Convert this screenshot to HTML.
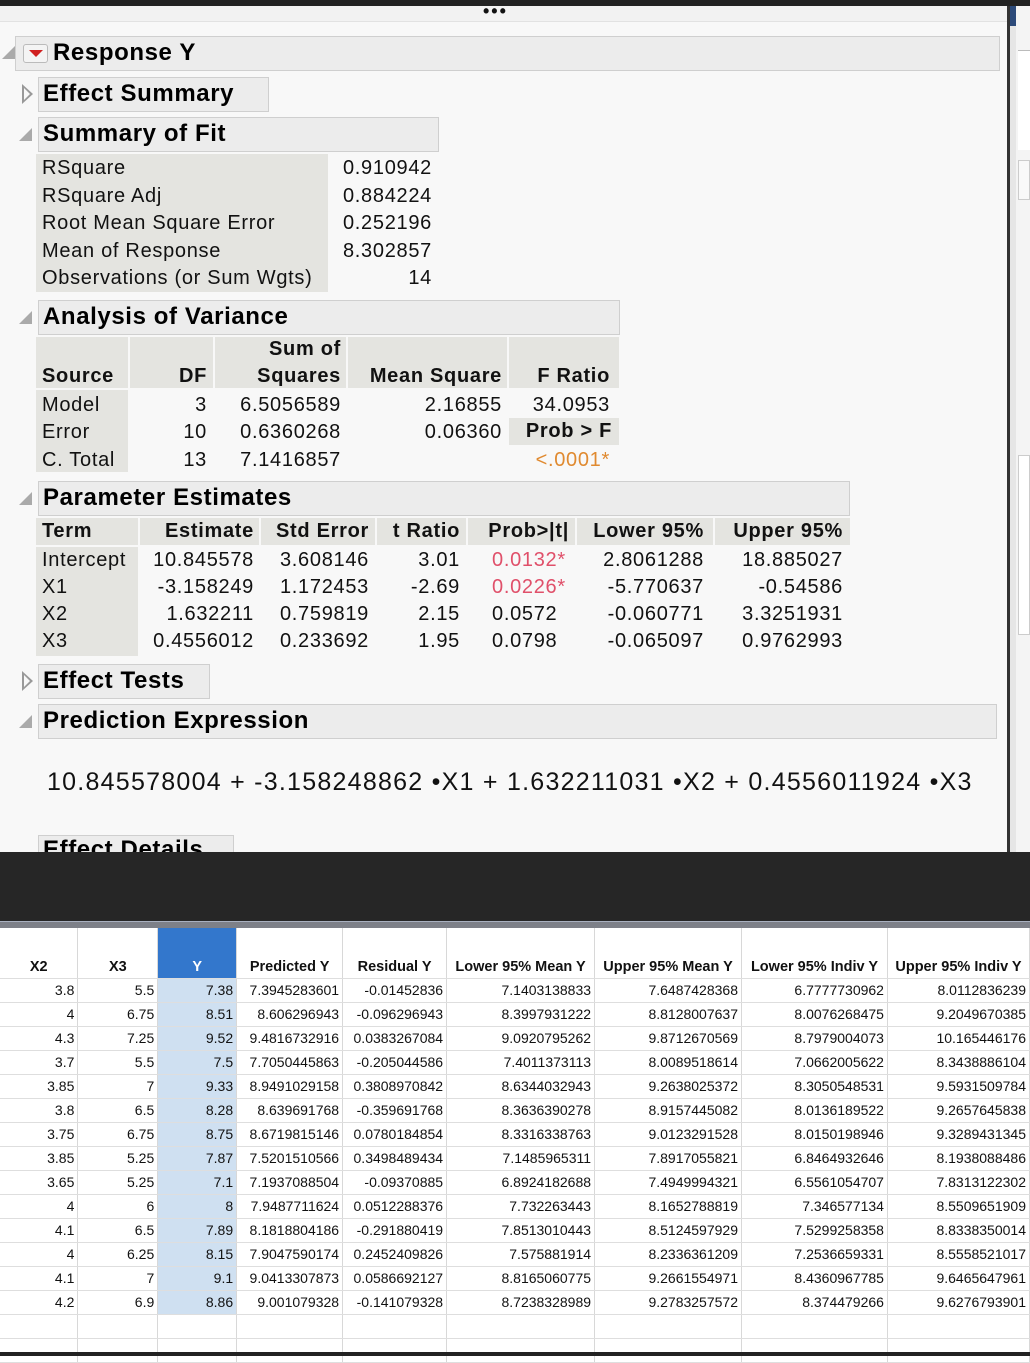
<!DOCTYPE html>
<html><head><meta charset="utf-8"><style>
*{margin:0;padding:0;box-sizing:border-box}
body{width:1030px;height:1356px;overflow:hidden;background:#222;font-family:"Liberation Sans",sans-serif;position:relative;color:#111}
.a{position:absolute;white-space:nowrap}
.hb{position:absolute;background:#ececec;border:1px solid #cfcfcf}
.h{position:absolute;font-weight:bold;font-size:24px;line-height:34px;white-space:nowrap;color:#000;letter-spacing:0.6px}
.f{font-size:20px;line-height:27px;letter-spacing:0.7px}
.bg{position:absolute;background:#e4e4e0}
.r{text-align:right}
.b{font-weight:bold}
.tri{position:absolute;width:0;height:0}
table{position:absolute;left:0;top:928px;border-collapse:collapse;background:#fff;font-size:14px;table-layout:fixed}
td,th{border-right:1px solid #d8d8d8;border-bottom:1px solid #dedede;text-align:right;padding:0 3px;height:24px;line-height:23px;white-space:nowrap;overflow:hidden}
th{height:50px;vertical-align:bottom;padding-bottom:2px;font-weight:bold;text-align:center;line-height:18px;font-size:14.5px}
td.y{background:#cfe0f1}
th.y{background:#3377cc;color:#fff}
</style></head><body>
<div class="a" style="left:0;top:6px;width:1007px;height:846px;background:#f8f8f8"></div>
<div class="a" style="left:0;top:6px;width:1007px;height:16px;background:#f2f2f2;border-bottom:1px solid #e2e2e2"></div>
<div class="a" style="left:483px;top:0px;font-size:18px;font-weight:bold;letter-spacing:2px;line-height:22px">•••</div>
<div class="a" style="left:1007px;top:6px;width:3px;height:846px;background:#333"></div>
<div class="a" style="left:1010px;top:6px;width:20px;height:846px;background:#f4f4f4"></div>
<div class="a" style="left:1010px;top:6px;width:6px;height:846px;background:#e6e6e6"></div>
<div class="a" style="left:1010px;top:6px;width:6px;height:20px;background:#2c4a7a"></div>
<div class="a" style="left:1018px;top:50px;width:12px;height:100px;background:#fff;border-top:1px solid #bbb"></div>
<div class="a" style="left:1018px;top:160px;width:12px;height:40px;background:#f9f9f9;border:1px solid #ccc"></div>
<div class="a" style="left:1018px;top:455px;width:12px;height:180px;background:#fff;border:1px solid #ccc"></div>

<div class="hb" style="left:15px;top:36px;width:985px;height:35px"></div>
<div class="tri" style="left:2px;top:46px;border-bottom:13px solid #aaa;border-left:13px solid transparent"></div>
<div class="a" style="left:23px;top:44px;width:25px;height:19px;border:1px solid #bbb;border-radius:3px;background:#f4f4f4"></div>
<div class="tri" style="left:29px;top:50px;border-top:7px solid #d02020;border-left:7px solid transparent;border-right:7px solid transparent"></div>
<div class="h" style="left:53px;top:36px">Response Y</div>

<div class="hb" style="left:38px;top:77px;width:231px;height:35px"></div>
<div class="tri" style="left:22px;top:84px;border-left:11px solid #999;border-top:10px solid transparent;border-bottom:10px solid transparent"></div>
<div class="tri" style="left:24px;top:88px;border-left:6px solid #f8f8f8;border-top:6px solid transparent;border-bottom:6px solid transparent"></div>
<div class="h" style="left:43px;top:77px">Effect Summary</div>

<div class="hb" style="left:38px;top:117px;width:401px;height:35px"></div>
<div class="tri" style="left:19px;top:128px;border-bottom:13px solid #aaa;border-left:13px solid transparent"></div>
<div class="h" style="left:43px;top:117px">Summary of Fit</div>
<div class="bg" style="left:36px;top:154px;width:292px;height:138px"></div>
<div class="a f" style="left:42px;top:155px">RSquare</div>
<div class="a f" style="left:42px;top:183px">RSquare Adj</div>
<div class="a f" style="left:42px;top:210px">Root Mean Square Error</div>
<div class="a f" style="left:42px;top:238px">Mean of Response</div>
<div class="a f" style="left:42px;top:265px">Observations (or Sum Wgts)</div>
<div class="a f r" style="left:330px;width:102px;top:155px">0.910942</div>
<div class="a f r" style="left:330px;width:102px;top:183px">0.884224</div>
<div class="a f r" style="left:330px;width:102px;top:210px">0.252196</div>
<div class="a f r" style="left:330px;width:102px;top:238px">8.302857</div>
<div class="a f r" style="left:330px;width:102px;top:265px">14</div>

<div class="hb" style="left:38px;top:300px;width:582px;height:35px"></div>
<div class="tri" style="left:19px;top:311px;border-bottom:13px solid #aaa;border-left:13px solid transparent"></div>
<div class="h" style="left:43px;top:300px">Analysis of Variance</div>
<div class="bg" style="left:36px;top:337px;width:92px;height:51px"></div>
<div class="bg" style="left:130px;top:337px;width:83px;height:51px"></div>
<div class="bg" style="left:215px;top:337px;width:131px;height:51px"></div>
<div class="bg" style="left:348px;top:337px;width:159px;height:51px"></div>
<div class="bg" style="left:509px;top:337px;width:110px;height:51px"></div>
<div class="bg" style="left:36px;top:390px;width:92px;height:82px"></div>
<div class="bg" style="left:509px;top:418px;width:110px;height:27px"></div>
<div class="a f b" style="left:42px;top:363px">Source</div>
<div class="a f b r" style="left:130px;width:77px;top:363px">DF</div>
<div class="a f b r" style="left:215px;width:126px;top:336px">Sum of</div>
<div class="a f b r" style="left:215px;width:126px;top:363px">Squares</div>
<div class="a f b r" style="left:348px;width:154px;top:363px">Mean Square</div>
<div class="a f b r" style="left:509px;width:101px;top:363px">F Ratio</div>
<div class="a f" style="left:42px;top:392px">Model</div>
<div class="a f" style="left:42px;top:419px">Error</div>
<div class="a f" style="left:42px;top:447px">C. Total</div>
<div class="a f r" style="left:130px;width:77px;top:392px">3</div>
<div class="a f r" style="left:130px;width:77px;top:419px">10</div>
<div class="a f r" style="left:130px;width:77px;top:447px">13</div>
<div class="a f r" style="left:215px;width:126px;top:392px">6.5056589</div>
<div class="a f r" style="left:215px;width:126px;top:419px">0.6360268</div>
<div class="a f r" style="left:215px;width:126px;top:447px">7.1416857</div>
<div class="a f r" style="left:348px;width:154px;top:392px">2.16855</div>
<div class="a f r" style="left:348px;width:154px;top:419px">0.06360</div>
<div class="a f r" style="left:509px;width:101px;top:392px">34.0953</div>
<div class="a f b r" style="left:509px;width:103px;top:418px">Prob &gt; F</div>
<div class="a f r" style="left:509px;width:101px;top:447px;color:#e08a30">&lt;.0001*</div>

<div class="hb" style="left:38px;top:481px;width:812px;height:35px"></div>
<div class="tri" style="left:19px;top:492px;border-bottom:13px solid #aaa;border-left:13px solid transparent"></div>
<div class="h" style="left:43px;top:481px">Parameter Estimates</div>
<div class="bg" style="left:36px;top:518px;width:102px;height:27px"></div>
<div class="bg" style="left:140px;top:518px;width:119px;height:27px"></div>
<div class="bg" style="left:261px;top:518px;width:114px;height:27px"></div>
<div class="bg" style="left:377px;top:518px;width:89px;height:27px"></div>
<div class="bg" style="left:468px;top:518px;width:107px;height:27px"></div>
<div class="bg" style="left:577px;top:518px;width:136px;height:27px"></div>
<div class="bg" style="left:715px;top:518px;width:135px;height:27px"></div>
<div class="bg" style="left:36px;top:547px;width:102px;height:109px"></div>
<div class="a f b" style="left:42px;top:518px">Term</div>
<div class="a f b r" style="left:140px;width:114px;top:518px">Estimate</div>
<div class="a f b r" style="left:261px;width:108px;top:518px">Std Error</div>
<div class="a f b r" style="left:377px;width:83px;top:518px">t Ratio</div>
<div class="a f b r" style="left:468px;width:101px;top:518px">Prob&gt;|t|</div>
<div class="a f b r" style="left:577px;width:127px;top:518px">Lower 95%</div>
<div class="a f b r" style="left:715px;width:128px;top:518px">Upper 95%</div>
<div class="a f" style="left:42px;top:547px">Intercept<br>X1<br>X2<br>X3</div>
<div class="a f r" style="left:140px;width:114px;top:547px">10.845578<br>-3.158249<br>1.632211<br>0.4556012</div>
<div class="a f r" style="left:261px;width:108px;top:547px">3.608146<br>1.172453<br>0.759819<br>0.233692</div>
<div class="a f r" style="left:377px;width:83px;top:547px">3.01<br>-2.69<br>2.15<br>1.95</div>
<div class="a f" style="left:492px;top:547px"><span style="color:#e0506a">0.0132*<br>0.0226*</span><br>0.0572<br>0.0798</div>
<div class="a f r" style="left:577px;width:127px;top:547px">2.8061288<br>-5.770637<br>-0.060771<br>-0.065097</div>
<div class="a f r" style="left:715px;width:128px;top:547px">18.885027<br>-0.54586<br>3.3251931<br>0.9762993</div>

<div class="hb" style="left:38px;top:664px;width:172px;height:35px"></div>
<div class="tri" style="left:22px;top:671px;border-left:11px solid #999;border-top:10px solid transparent;border-bottom:10px solid transparent"></div>
<div class="tri" style="left:24px;top:675px;border-left:6px solid #f8f8f8;border-top:6px solid transparent;border-bottom:6px solid transparent"></div>
<div class="h" style="left:43px;top:664px">Effect Tests</div>

<div class="hb" style="left:38px;top:704px;width:959px;height:35px"></div>
<div class="tri" style="left:19px;top:715px;border-bottom:13px solid #aaa;border-left:13px solid transparent"></div>
<div class="h" style="left:43px;top:704px">Prediction Expression</div>
<div class="a" style="left:47px;top:766px;font-size:25px;line-height:32px;letter-spacing:1.25px">10.845578004 + -3.158248862 •X1 + 1.632211031 •X2 + 0.4556011924 •X3</div>

<div class="hb" style="left:38px;top:835px;width:196px;height:30px"></div>
<div class="h" style="left:43px;top:833px">Effect Details</div>

<div class="a" style="left:0;top:852px;width:1030px;height:70px;background:#262626"></div>
<div class="a" style="left:0;top:921px;width:1030px;height:7px;background:#7d8088;border-top:1px solid #a8b0c0"></div>

<table>
<colgroup><col style="width:78px"><col style="width:80px"><col style="width:79px"><col style="width:106px"><col style="width:104px"><col style="width:148px"><col style="width:147px"><col style="width:146px"><col style="width:142px"></colgroup>
<tr><th>X2</th><th>X3</th><th class="y">Y</th><th>Predicted Y</th><th>Residual Y</th><th>Lower 95% Mean Y</th><th>Upper 95% Mean Y</th><th>Lower 95% Indiv Y</th><th>Upper 95% Indiv Y</th></tr>
<tr><td>3.8</td><td>5.5</td><td class="y">7.38</td><td>7.3945283601</td><td>-0.01452836</td><td>7.1403138833</td><td>7.6487428368</td><td>6.7777730962</td><td>8.0112836239</td></tr>
<tr><td>4</td><td>6.75</td><td class="y">8.51</td><td>8.606296943</td><td>-0.096296943</td><td>8.3997931222</td><td>8.8128007637</td><td>8.0076268475</td><td>9.2049670385</td></tr>
<tr><td>4.3</td><td>7.25</td><td class="y">9.52</td><td>9.4816732916</td><td>0.0383267084</td><td>9.0920795262</td><td>9.8712670569</td><td>8.7979004073</td><td>10.165446176</td></tr>
<tr><td>3.7</td><td>5.5</td><td class="y">7.5</td><td>7.7050445863</td><td>-0.205044586</td><td>7.4011373113</td><td>8.0089518614</td><td>7.0662005622</td><td>8.3438886104</td></tr>
<tr><td>3.85</td><td>7</td><td class="y">9.33</td><td>8.9491029158</td><td>0.3808970842</td><td>8.6344032943</td><td>9.2638025372</td><td>8.3050548531</td><td>9.5931509784</td></tr>
<tr><td>3.8</td><td>6.5</td><td class="y">8.28</td><td>8.639691768</td><td>-0.359691768</td><td>8.3636390278</td><td>8.9157445082</td><td>8.0136189522</td><td>9.2657645838</td></tr>
<tr><td>3.75</td><td>6.75</td><td class="y">8.75</td><td>8.6719815146</td><td>0.0780184854</td><td>8.3316338763</td><td>9.0123291528</td><td>8.0150198946</td><td>9.3289431345</td></tr>
<tr><td>3.85</td><td>5.25</td><td class="y">7.87</td><td>7.5201510566</td><td>0.3498489434</td><td>7.1485965311</td><td>7.8917055821</td><td>6.8464932646</td><td>8.1938088486</td></tr>
<tr><td>3.65</td><td>5.25</td><td class="y">7.1</td><td>7.1937088504</td><td>-0.09370885</td><td>6.8924182688</td><td>7.4949994321</td><td>6.5561054707</td><td>7.8313122302</td></tr>
<tr><td>4</td><td>6</td><td class="y">8</td><td>7.9487711624</td><td>0.0512288376</td><td>7.732263443</td><td>8.1652788819</td><td>7.346577134</td><td>8.5509651909</td></tr>
<tr><td>4.1</td><td>6.5</td><td class="y">7.89</td><td>8.1818804186</td><td>-0.291880419</td><td>7.8513010443</td><td>8.5124597929</td><td>7.5299258358</td><td>8.8338350014</td></tr>
<tr><td>4</td><td>6.25</td><td class="y">8.15</td><td>7.9047590174</td><td>0.2452409826</td><td>7.575881914</td><td>8.2336361209</td><td>7.2536659331</td><td>8.5558521017</td></tr>
<tr><td>4.1</td><td>7</td><td class="y">9.1</td><td>9.0413307873</td><td>0.0586692127</td><td>8.8165060775</td><td>9.2661554971</td><td>8.4360967785</td><td>9.6465647961</td></tr>
<tr><td>4.2</td><td>6.9</td><td class="y">8.86</td><td>9.001079328</td><td>-0.141079328</td><td>8.7238328989</td><td>9.2783257572</td><td>8.374479266</td><td>9.6276793901</td></tr>
<tr><td></td><td></td><td></td><td></td><td></td><td></td><td></td><td></td><td></td></tr>
<tr><td style="height:14px"></td><td></td><td></td><td></td><td></td><td></td><td></td><td></td><td></td></tr>
</table>
<div class="a" style="left:0;top:1352px;width:1030px;height:4px;background:#222"></div>
</body></html>
